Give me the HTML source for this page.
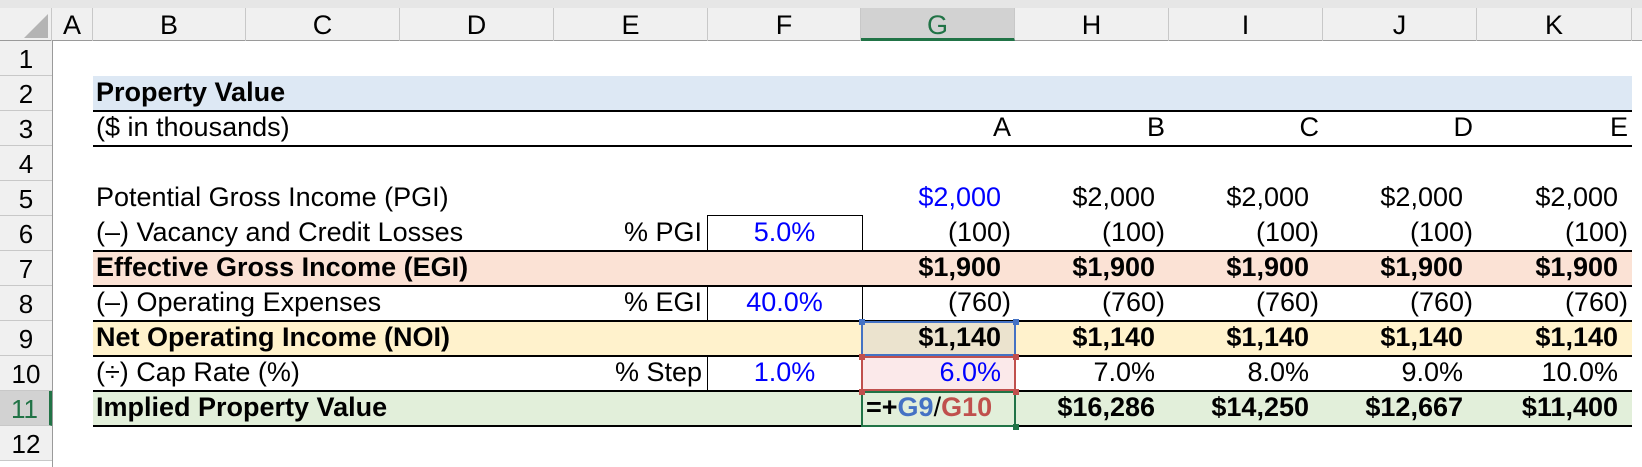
<!DOCTYPE html>
<html><head><meta charset="utf-8"><style>
*{margin:0;padding:0;box-sizing:border-box}
body{width:1642px;height:467px;background:#fff;position:relative;overflow:hidden;font-family:"Liberation Sans",Arial,sans-serif;font-size:27px;color:#000}
.a{position:absolute}
.t{position:absolute;height:35px;line-height:37px;white-space:nowrap}
.r{text-align:right}
.c{text-align:center}
.b{font-weight:bold}
.blue{color:#0000ff}
.hl{position:absolute;height:1.5px;background:#000;left:93px;width:1539px}
.ch{position:absolute;top:8px;height:33px;line-height:35px;text-align:center;border-right:1px solid #c8c8c8;font-size:27px;color:#000}
.rh{position:absolute;left:0;width:52px;height:35px;line-height:37px;text-align:center;border-bottom:1px solid #c8c8c8;background:#f0f0f0;font-size:26px}
</style></head><body>
<div class="a" style="left:0;top:0;width:1642px;height:8px;background:#e6e6e6"></div>
<div class="a" style="left:0;top:8px;width:1642px;height:33px;background:#f0f0f0;border-bottom:1px solid #9a9a9a"></div>
<div class="a" style="left:0;top:8px;width:52px;height:33px;border-right:1px solid #c8c8c8"></div>
<svg class="a" style="left:22px;top:12px" width="28" height="28"><polygon points="26,2 26,26 2,26" fill="#b4b4b4"/></svg>
<div class="ch" style="left:52px;width:41px">A</div>
<div class="ch" style="left:93px;width:153px">B</div>
<div class="ch" style="left:246px;width:154px">C</div>
<div class="ch" style="left:400px;width:154px">D</div>
<div class="ch" style="left:554px;width:154px">E</div>
<div class="ch" style="left:708px;width:153px">F</div>
<div class="ch" style="left:861px;width:154px;background:#d2d2d2;color:#217346;border-bottom:3px solid #217346">G</div>
<div class="ch" style="left:1015px;width:154px">H</div>
<div class="ch" style="left:1169px;width:154px">I</div>
<div class="ch" style="left:1323px;width:154px">J</div>
<div class="ch" style="left:1477px;width:155px">K</div>
<div class="a" style="left:52px;top:41px;width:1px;height:426px;background:#9a9a9a"></div>
<div class="rh" style="top:41px">1</div>
<div class="rh" style="top:76px">2</div>
<div class="rh" style="top:111px">3</div>
<div class="rh" style="top:146px">4</div>
<div class="rh" style="top:181px">5</div>
<div class="rh" style="top:216px">6</div>
<div class="rh" style="top:251px">7</div>
<div class="rh" style="top:286px">8</div>
<div class="rh" style="top:321px">9</div>
<div class="rh" style="top:356px">10</div>
<div class="rh" style="top:391px;background:#d2d2d2;color:#217346;border-right:3px solid #217346">11</div>
<div class="rh" style="top:426px">12</div>

<div class="a" style="left:93px;top:76px;width:1539px;height:35px;background:#dde8f4"></div>
<div class="a" style="left:93px;top:251px;width:1539px;height:35px;background:#fbe2d5"></div>
<div class="a" style="left:93px;top:321px;width:1539px;height:35px;background:#fff2cc"></div>
<div class="a" style="left:861px;top:321px;width:154px;height:35px;background:#ebe3ce"></div>
<div class="a" style="left:861px;top:356px;width:154px;height:35px;background:#fbe9ea"></div>
<div class="a" style="left:93px;top:391px;width:1539px;height:35px;background:#e2efda"></div>

<div class="hl" style="top:110px"></div>
<div class="hl" style="top:145px"></div>
<div class="hl" style="top:250px"></div>
<div class="hl" style="top:285px"></div>
<div class="hl" style="top:320px"></div>
<div class="hl" style="top:355px"></div>
<div class="hl" style="top:390px"></div>
<div class="hl" style="top:425px"></div>
<div class="a" style="left:707px;top:215px;width:156px;height:37px;border:1.5px solid #000"></div>
<div class="a" style="left:707px;top:286px;width:156px;height:35px;border-left:1.5px solid #000;border-right:1.5px solid #000"></div>
<div class="a" style="left:707px;top:356px;width:156px;height:35px;border-left:1.5px solid #000;border-right:1.5px solid #000"></div>

<div class="a" style="left:861px;top:321px;width:155px;height:35px;border:2px solid #4472c4"></div>
<div class="a" style="left:861px;top:356px;width:155px;height:35px;border:2px solid #c0504d"></div>
<div class="a" style="left:861px;top:391px;width:155px;height:36px;border:2px solid #217346"></div>
<div class="a" style="left:859px;top:319px;width:6px;height:6px;background:#4472c4"></div>
<div class="a" style="left:1013px;top:319px;width:6px;height:6px;background:#4472c4"></div>
<div class="a" style="left:859px;top:354px;width:6px;height:6px;background:#c0504d"></div>
<div class="a" style="left:1013px;top:354px;width:6px;height:6px;background:#c0504d"></div>
<div class="a" style="left:859px;top:389px;width:6px;height:6px;background:#c0504d"></div>
<div class="a" style="left:1013px;top:389px;width:6px;height:6px;background:#c0504d"></div>
<div class="a" style="left:1013px;top:424px;width:6px;height:6px;background:#217346"></div>

<div class="t b" style="left:96px;top:74px">Property Value</div>
<div class="t" style="left:96px;top:109px">($ in thousands)</div>
<div class="t" style="left:96px;top:179px">Potential Gross Income (PGI)</div>
<div class="t" style="left:96px;top:214px">(–) Vacancy and Credit Losses</div>
<div class="t b" style="left:96px;top:249px">Effective Gross Income (EGI)</div>
<div class="t" style="left:96px;top:284px">(–) Operating Expenses</div>
<div class="t b" style="left:96px;top:319px">Net Operating Income (NOI)</div>
<div class="t" style="left:96px;top:354px">(÷) Cap Rate (%)</div>
<div class="t b" style="left:96px;top:389px">Implied Property Value</div>

<div class="t r" style="left:554px;width:148px;top:214px">% PGI</div>
<div class="t r" style="left:554px;width:148px;top:284px">% EGI</div>
<div class="t r" style="left:554px;width:148px;top:354px">% Step</div>
<div class="t c blue" style="left:708px;width:153px;top:214px">5.0%</div>
<div class="t c blue" style="left:708px;width:153px;top:284px">40.0%</div>
<div class="t c blue" style="left:708px;width:153px;top:354px">1.0%</div>

<div class="t r" style="left:861px;width:150px;top:109px">A</div>
<div class="t r blue" style="left:861px;width:140px;top:179px">$2,000</div>
<div class="t r" style="left:861px;width:150px;top:214px">(100)</div>
<div class="t r b" style="left:861px;width:140px;top:249px">$1,900</div>
<div class="t r" style="left:861px;width:150px;top:284px">(760)</div>
<div class="t r b" style="left:861px;width:140px;top:319px">$1,140</div>
<div class="t r blue" style="left:861px;width:140px;top:354px">6.0%</div>
<div class="t b" style="left:866px;top:389px">=+<span style="color:#4472c4">G9</span><span style="font-weight:normal">/</span><span style="color:#c0504d">G10</span></div>

<div class="t r" style="left:1015px;width:150px;top:109px">B</div>
<div class="t r" style="left:1015px;width:140px;top:179px">$2,000</div>
<div class="t r" style="left:1015px;width:150px;top:214px">(100)</div>
<div class="t r b" style="left:1015px;width:140px;top:249px">$1,900</div>
<div class="t r" style="left:1015px;width:150px;top:284px">(760)</div>
<div class="t r b" style="left:1015px;width:140px;top:319px">$1,140</div>
<div class="t r" style="left:1015px;width:140px;top:354px">7.0%</div>
<div class="t r b" style="left:1015px;width:140px;top:389px">$16,286</div>
<div class="t r" style="left:1169px;width:150px;top:109px">C</div>
<div class="t r" style="left:1169px;width:140px;top:179px">$2,000</div>
<div class="t r" style="left:1169px;width:150px;top:214px">(100)</div>
<div class="t r b" style="left:1169px;width:140px;top:249px">$1,900</div>
<div class="t r" style="left:1169px;width:150px;top:284px">(760)</div>
<div class="t r b" style="left:1169px;width:140px;top:319px">$1,140</div>
<div class="t r" style="left:1169px;width:140px;top:354px">8.0%</div>
<div class="t r b" style="left:1169px;width:140px;top:389px">$14,250</div>
<div class="t r" style="left:1323px;width:150px;top:109px">D</div>
<div class="t r" style="left:1323px;width:140px;top:179px">$2,000</div>
<div class="t r" style="left:1323px;width:150px;top:214px">(100)</div>
<div class="t r b" style="left:1323px;width:140px;top:249px">$1,900</div>
<div class="t r" style="left:1323px;width:150px;top:284px">(760)</div>
<div class="t r b" style="left:1323px;width:140px;top:319px">$1,140</div>
<div class="t r" style="left:1323px;width:140px;top:354px">9.0%</div>
<div class="t r b" style="left:1323px;width:140px;top:389px">$12,667</div>
<div class="t r" style="left:1477px;width:151px;top:109px">E</div>
<div class="t r" style="left:1477px;width:141px;top:179px">$2,000</div>
<div class="t r" style="left:1477px;width:151px;top:214px">(100)</div>
<div class="t r b" style="left:1477px;width:141px;top:249px">$1,900</div>
<div class="t r" style="left:1477px;width:151px;top:284px">(760)</div>
<div class="t r b" style="left:1477px;width:141px;top:319px">$1,140</div>
<div class="t r" style="left:1477px;width:141px;top:354px">10.0%</div>
<div class="t r b" style="left:1477px;width:141px;top:389px">$11,400</div>
</body></html>
